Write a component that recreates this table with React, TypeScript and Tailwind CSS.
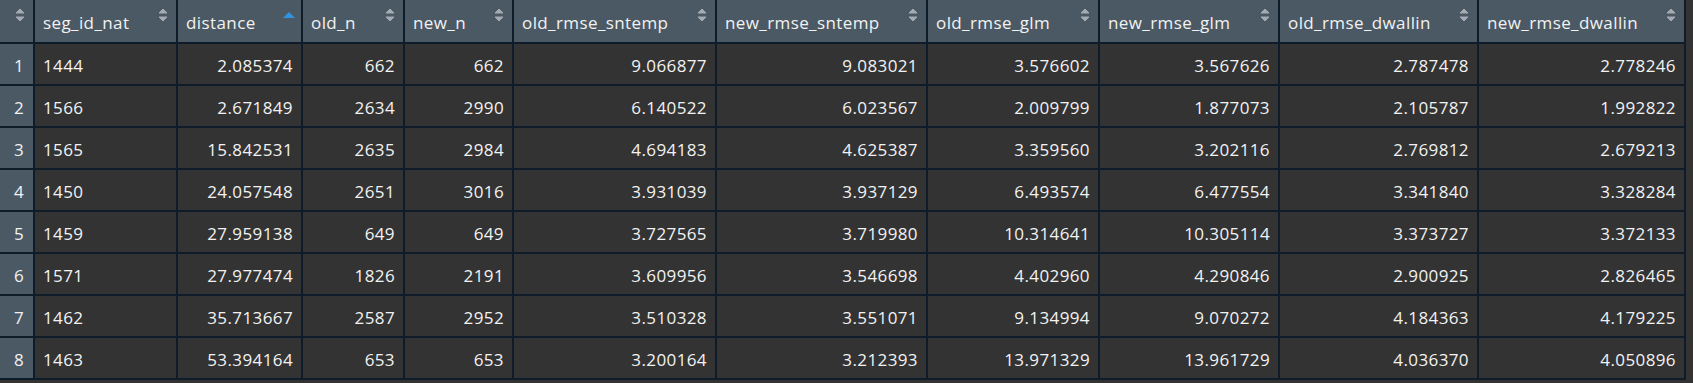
import React from 'react';

const columns = [
  { key: 'seg_id_nat', width: 'w-[143px]', align: 'left' },
  { key: 'distance', width: 'w-[125px]', align: 'right' },
  { key: 'old_n', width: 'w-[102px]', align: 'right' },
  { key: 'new_n', width: 'w-[109px]', align: 'right' },
  { key: 'old_rmse_sntemp', width: 'w-[203px]', align: 'right' },
  { key: 'new_rmse_sntemp', width: 'w-[211px]', align: 'right' },
  { key: 'old_rmse_glm', width: 'w-[172px]', align: 'right' },
  { key: 'new_rmse_glm', width: 'w-[180px]', align: 'right' },
  { key: 'old_rmse_dwallin', width: 'w-[199px]', align: 'right' },
  { key: 'new_rmse_dwallin', width: 'w-[207px]', align: 'right' },
];

const rows = [
  ['1444', '2.085374', '662', '662', '9.066877', '9.083021', '3.576602', '3.567626', '2.787478', '2.778246'],
  ['1566', '2.671849', '2634', '2990', '6.140522', '6.023567', '2.009799', '1.877073', '2.105787', '1.992822'],
  ['1565', '15.842531', '2635', '2984', '4.694183', '4.625387', '3.359560', '3.202116', '2.769812', '2.679213'],
  ['1450', '24.057548', '2651', '3016', '3.931039', '3.937129', '6.493574', '6.477554', '3.341840', '3.328284'],
  ['1459', '27.959138', '649', '649', '3.727565', '3.719980', '10.314641', '10.305114', '3.373727', '3.372133'],
  ['1571', '27.977474', '1826', '2191', '3.609956', '3.546698', '4.402960', '4.290846', '2.900925', '2.826465'],
  ['1462', '35.713667', '2587', '2952', '3.510328', '3.551071', '9.134994', '9.070272', '4.184363', '4.179225'],
  ['1463', '53.394164', '653', '653', '3.200164', '3.212393', '13.971329', '13.961729', '4.036370', '4.050896'],
];

function SortIcon() {
  return (
    <svg className="absolute right-[8px] top-[8px]" width="10" height="14" viewBox="0 0 10 14">
      <path d="M1 5 L5 1 L9 5 Z" fill="#a3abb2" stroke="#a3abb2" strokeWidth="1" strokeLinejoin="round" />
      <path d="M1 9 L5 13 L9 9 Z" fill="#a3abb2" stroke="#a3abb2" strokeWidth="1" strokeLinejoin="round" />
    </svg>
  );
}

function SortedIcon() {
  return (
    <svg className="absolute right-[6px] top-[12px]" width="12" height="6" viewBox="0 0 12 6">
      <path d="M0 6 L6 0 L12 6 Z" fill="#2e93e0" />
    </svg>
  );
}

export default function App() {
  return (
    <div
      className="w-[1693px] h-[383px] overflow-hidden bg-[#333333] text-[#f2f2f2] text-[17px] tracking-[0.4px]"
      style={{ fontFamily: '"Open Sans", "Noto Sans", sans-serif' }}
    >
      <div className="w-[1686px]">
        {/* header */}
        <div className="flex bg-[#4b5964] border-b-2 border-[#0e1c2a]">
          <div className="relative w-[35px] h-[42px] border-r-2 border-[#0e1c2a]">
            <SortIcon />
          </div>
          {columns.map((col) => (
            <div
              key={col.key}
              className={`relative ${col.width} h-[42px] pl-[8px] pt-[13px] leading-[20px] border-r-2 border-[#0e1c2a]`}
            >
              {col.key}
              {col.key === 'distance' ? <SortedIcon /> : <SortIcon />}
            </div>
          ))}
        </div>

        {/* body */}
        {rows.map((row, i) => (
          <div key={i} className="flex border-b-2 border-[#0e1c2a]">
            <div className="w-[35px] h-[40px] bg-[#4b5964] pr-[9px] pt-[12px] leading-[20px] text-right border-r-2 border-[#0e1c2a]">
              {i + 1}
            </div>
            {row.map((cell, j) => (
              <div
                key={j}
                className={`${columns[j].width} h-[40px] px-[8px] pt-[12px] leading-[20px] border-r-2 border-[#0e1c2a] ${
                  columns[j].align === 'right' ? 'text-right' : 'text-left'
                }`}
              >
                {cell}
              </div>
            ))}
          </div>
        ))}
      </div>
    </div>
  );
}
